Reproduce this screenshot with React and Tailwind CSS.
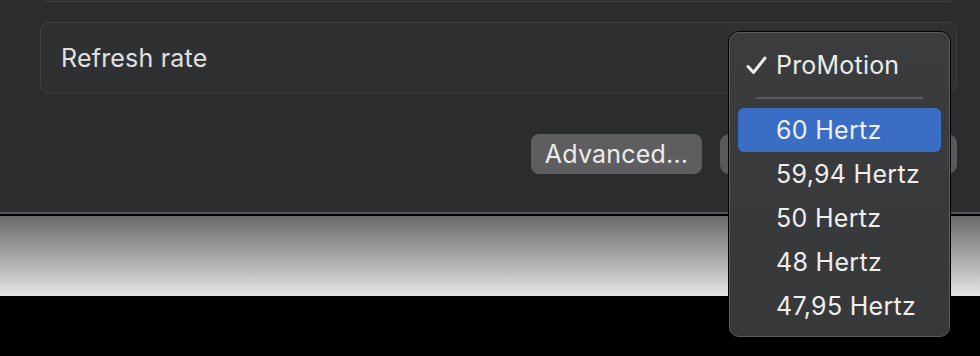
import React from "react";

export default function App() {
  const items = ["60 Hertz", "59,94 Hertz", "50 Hertz", "48 Hertz", "47,95 Hertz"];
  return (
    <div
      className="relative w-[980px] h-[356px] overflow-hidden bg-black flex flex-col"
      style={{ fontFamily: "Inter, 'Noto Sans', sans-serif" }}
    >
      {/* window */}
      <div className="h-[212px] bg-[#2b2c2e] flex flex-col pl-[40px] pr-[23px] shrink-0">
        <div className="-mt-[40px] h-[42px] rounded-[8px] border border-[#3c3d3f] bg-[#2f3032] shrink-0" />
        <div className="mt-[20px] h-[72px] rounded-[8px] border border-[#3c3d3f] bg-[#2f3032] flex items-center pl-[20px] pt-[2px] shrink-0">
          <span className="text-[25px] text-[#e0e0e0] tracking-[0.2px]">Refresh rate</span>
        </div>
        <div className="mt-[40px] flex justify-end gap-[18px]">
          <div className="h-[40px] w-[171px] rounded-[8px] bg-[#5e5e60] flex items-center justify-center">
            <span className="text-[25px] text-[#ececec] leading-none tracking-[0.2px]">Advanced...</span>
          </div>
          <div className="h-[40px] w-[237px] rounded-[9px] bg-[#59595b]" />
        </div>
      </div>
      <div className="h-[2px] bg-[#565658] shrink-0" />
      <div className="h-[2px] bg-black shrink-0" />
      <div className="h-[80px] bg-gradient-to-b from-[#6a6a6a] to-[#e6e6e6] shrink-0" />
      <div className="flex-1 bg-black" />

      {/* popup menu */}
      <div className="absolute left-[728px] top-[31px] w-[223px] h-[307px] rounded-[11px] border border-black">
        <div className="w-full h-full rounded-[10px] border border-[#5c5c5e] bg-gradient-to-b from-[#3b3c3e] to-[#37383a] flex flex-col px-[8px] pt-[7px]">
          <div className="h-[50px] flex items-center pl-[8px]">
            <svg width="21" height="19" viewBox="0 0 21 19" className="mr-[9px]">
              <path d="M2 10.5 L7.5 16.5 L19 2" fill="none" stroke="#ececec" strokeWidth="3" strokeLinecap="round" strokeLinejoin="round" />
            </svg>
            <span className="text-[25px] text-[#ececec] leading-none tracking-[0.2px]">ProMotion</span>
          </div>
          <div className="mx-[18px] mt-[7px] h-[2px] bg-[#5a5b5d]" />
          <div className="mt-[9px] flex flex-col">
            {items.map((t, i) => (
              <div
                key={t}
                className={
                  i === 0
                    ? "h-[44px] rounded-[6px] bg-[#3a6ec4] flex items-center pl-[38px]"
                    : "h-[44px] flex items-center pl-[38px]"
                }
              >
                <span className="text-[25px] text-[#efefef] leading-none tracking-[0.3px]">{t}</span>
              </div>
            ))}
          </div>
        </div>
      </div>
    </div>
  );
}
